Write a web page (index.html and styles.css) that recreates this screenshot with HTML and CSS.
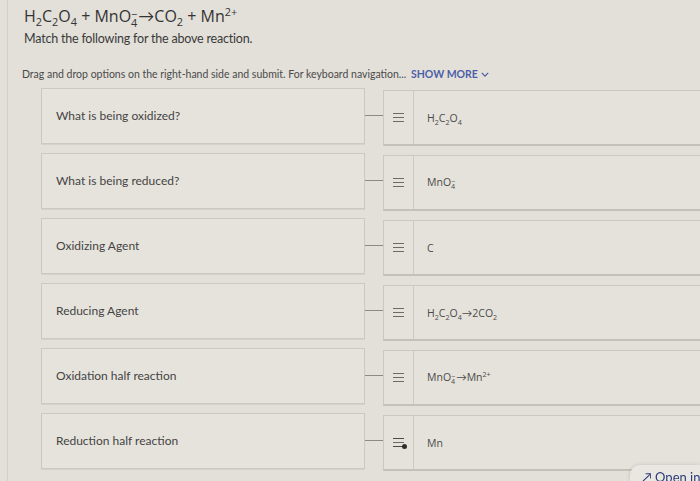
FILE: index.html
```html
<!DOCTYPE html>
<html>
<head>
<meta charset="utf-8">
<link rel="stylesheet" href="styles.css">
</head>
<body>
<div class="page">
  <div class="eq">H<sub>2</sub>C<sub>2</sub>O<sub>4</sub> + MnO<span class="ss"><span class="sp">−</span><span class="sb">4</span></span>→CO<sub>2</sub> + Mn<sup>2+</sup></div>
  <div class="prompt">Match the following for the above reaction.</div>
  <div class="instr">Drag and drop options on the right-hand side and submit. For keyboard navigation... <span class="more">SHOW MORE <svg class="chev" viewBox="0 0 10 6" width="8" height="5"><path d="M1 1l4 4 4-4" fill="none" stroke="currentColor" stroke-width="1.6"/></svg></span></div>

  <div class="rows">
    <div class="row">
      <div class="q">What is being oxidized?</div>
      <div class="link"></div>
      <div class="card"><div class="handle"><span class="bars"></span></div><div class="ans"><span>H<sub>2</sub>C<sub>2</sub>O<sub>4</sub></span></div></div>
    </div>
    <div class="row">
      <div class="q">What is being reduced?</div>
      <div class="link"></div>
      <div class="card"><div class="handle"><span class="bars"></span></div><div class="ans"><span>MnO<span class="ss"><span class="sp">−</span><span class="sb">4</span></span></span></div></div>
    </div>
    <div class="row">
      <div class="q">Oxidizing Agent</div>
      <div class="link"></div>
      <div class="card"><div class="handle"><span class="bars"></span></div><div class="ans"><span>C</span></div></div>
    </div>
    <div class="row">
      <div class="q">Reducing Agent</div>
      <div class="link"></div>
      <div class="card"><div class="handle"><span class="bars"></span></div><div class="ans"><span>H<sub>2</sub>C<sub>2</sub>O<sub>4</sub>→2CO<sub>2</sub></span></div></div>
    </div>
    <div class="row">
      <div class="q">Oxidation half reaction</div>
      <div class="link"></div>
      <div class="card"><div class="handle"><span class="bars"></span></div><div class="ans"><span>MnO<span class="ss"><span class="sp">−</span><span class="sb">4</span></span>→Mn<sup>2+</sup></span></div></div>
    </div>
    <div class="row">
      <div class="q">Reduction half reaction</div>
      <div class="link"></div>
      <div class="card"><div class="handle"><span class="bars cur"></span></div><div class="ans"><span>Mn</span></div></div>
    </div>
  </div>
</div>
<div class="reader">↗ Open in Reader</div>
</body>
</html>
```

FILE: styles.css
```css
html, body {
  margin: 0;
  padding: 0;
  background: #e3e0d9;
  overflow: hidden;
  height: 481px;
}
body {
  font-family: "Lato", "Open Sans", sans-serif;
  color: #3d3d3d;
}
.page {
  margin-left: 7px;
  border-left: 1px solid #d3d0c9;
  padding: 6px 0 0 16px;
  height: 481px;
  box-sizing: border-box;
  overflow: hidden;
}
.eq {
  font-family: "Open Sans", "Lato", sans-serif;
  font-size: 16px;
  line-height: 20px;
  color: #333;
}
sub, sup {
  font-size: 0.68em;
  line-height: 0;
}
.ss {
  display: inline-block;
  vertical-align: -0.45em;
  font-size: 0.68em;
  line-height: 0.8em;
  margin-right: 1px;
  text-align: center;
}
.ss > span {
  display: block;
}
.prompt {
  margin-top: 3px;
  font-size: 12.5px;
  line-height: 16px;
  letter-spacing: -0.2px;
  color: #3a3a3a;
}
.instr {
  margin-top: 20px;
  margin-left: -2px;
  font-size: 10.5px;
  line-height: 14px;
  color: #4a4a4a;
}
.more {
  color: #4d5ea8;
  font-weight: 700;
  margin-left: 2px;
}
.chev {
  vertical-align: 1px;
  margin-left: 1px;
}
.rows {
  margin-top: 7px;
  padding-left: 17px;
  display: flex;
  flex-direction: column;
  gap: 9px;
}
.row {
  display: flex;
  align-items: center;
  height: 56px;
}
.q {
  flex: none;
  width: 324px;
  height: 56px;
  box-sizing: border-box;
  border: 1px solid #ccc9c1;
  box-shadow: 0 1px 0 #d5d2cb;
  background: #e6e3dc;
  display: flex;
  align-items: center;
  padding-left: 14px;
  font-size: 12px;
  color: #444;
}
.link {
  flex: none;
  width: 18px;
  height: 1px;
  background: #8d8a84;
}
.card {
  flex: 1 1 auto;
  min-width: 0;
  height: 56px;
  box-sizing: border-box;
  border: 1px solid #cbc8c0;
  border-right: none;
  border-bottom: 2px solid #c4c1b9;
  background: #e5e2db;
  display: flex;
  align-items: stretch;
  margin-top: 5px;
}
.handle {
  width: 29px;
  border-right: 1px solid #cdcac2;
  display: flex;
  align-items: center;
  justify-content: center;
}
.bars {
  display: block;
  width: 11px;
  height: 7px;
  border-top: 1.5px solid #6d6b67;
  border-bottom: 1.5px solid #6d6b67;
  position: relative;
}
.bars::after {
  content: "";
  position: absolute;
  left: 0;
  right: 0;
  top: 2.5px;
  height: 1.5px;
  background: #6d6b67;
}
.bars.cur {
  border-color: #4d4b48;
}
.bars.cur::before {
  content: "";
  position: absolute;
  right: -3px;
  bottom: -3px;
  width: 5px;
  height: 5px;
  border-radius: 50%;
  background: #2f2e2c;
}
.ans {
  display: flex;
  align-items: center;
  padding-left: 13px;
  font-family: "Open Sans", "Lato", sans-serif;
  font-size: 10.5px;
  color: #4a4a4a;
}
.reader {
  position: fixed;
  left: 630px;
  top: 465px;
  width: 70px;
  height: 16px;
  overflow: hidden;
  background: #e9e7e2;
  border-radius: 10px 0 0 0;
  box-shadow: 0 0 4px rgba(0,0,0,0.15);
  padding: 4px 0 0 12px;
  box-sizing: border-box;
  font-size: 13px;
  line-height: 16px;
  color: #2c3b78;
  white-space: nowrap;
}
```
